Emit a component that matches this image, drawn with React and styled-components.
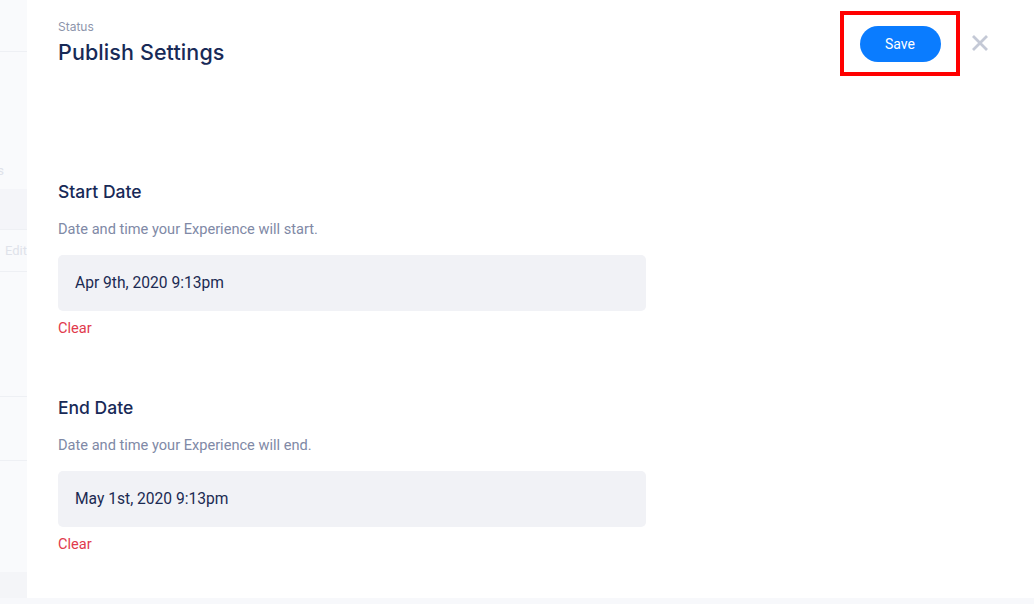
import React from "react";
import styled, { createGlobalStyle } from "styled-components";

const Global = createGlobalStyle`
  html, body { margin: 0; padding: 0; background: #f7f8fb; }
  body { font-family: Roboto, "Liberation Sans", Arial, sans-serif; }
  * { box-sizing: border-box; }
`;

const Screen = styled.div`
  width: 1034px;
  height: 604px;
  display: flex;
  flex-direction: column;
  background: #f7f8fb;
  overflow: hidden;
`;

const Body = styled.div`
  display: flex;
  height: 598px;
`;

const Sidebar = styled.aside`
  width: 27px;
  flex: none;
  background: #f9fafc;
  overflow: hidden;
  display: flex;
  flex-direction: column;
`;

const SideRow = styled.div`
  height: ${(p) => p.h}px;
  flex: none;
  display: flex;
  align-items: ${(p) => p.align || "center"};
  padding-bottom: ${(p) => p.pb || 0}px;
  background: ${(p) => p.bg || "transparent"};
  border-bottom: ${(p) => (p.line ? "1px solid #eef0f4" : "none")};
  color: #dfe2ea;
  font-size: 13px;
  white-space: nowrap;
  margin-left: ${(p) => p.shift || 0}px;
  gap: 6px;
`;

const Panel = styled.main`
  flex: 1;
  background: #ffffff;
  padding: 20px 0 0 31px;
  display: flex;
  flex-direction: column;
`;

const Header = styled.header`
  display: flex;
  justify-content: space-between;
  align-items: flex-start;
  height: 160px;
`;

const TitleBlock = styled.div`
  display: flex;
  flex-direction: column;
`;

const Eyebrow = styled.div`
  font-family: Inter, "Noto Sans", sans-serif;
  font-size: 12px;
  color: #8d95ab;
  line-height: 14px;
`;

const Title = styled.h1`
  margin: 4px 0 0;
  font-family: Inter, "Noto Sans", sans-serif;
  font-weight: 500;
  font-size: 21.5px;
  line-height: 28px;
  color: #182a57;
  letter-spacing: 0.1px;
`;

const Actions = styled.div`
  display: flex;
  align-items: center;
  margin-right: 44px;
  margin-top: -9px;
  gap: 10px;
`;

const Highlight = styled.div`
  border: 4px solid #ff0000;
  width: 120px;
  height: 65px;
  display: flex;
  align-items: center;
  justify-content: center;
`;

const SaveButton = styled.button`
  width: 81px;
  height: 36px;
  border-radius: 18px;
  border: none;
  background: #0a7cff;
  color: #ffffff;
  font-family: Roboto, "Liberation Sans", sans-serif;
  font-size: 14px;
  cursor: pointer;
`;

const CloseButton = styled.button`
  background: none;
  border: none;
  padding: 0;
  width: 20px;
  height: 20px;
  display: flex;
  align-items: center;
  justify-content: center;
  margin-top: -2px;
`;

const Section = styled.section`
  display: flex;
  flex-direction: column;
  width: 588px;
  margin-bottom: ${(p) => p.mb || 0}px;
`;

const SectionTitle = styled.h2`
  margin: 0;
  font-family: Inter, "Noto Sans", sans-serif;
  font-weight: 500;
  font-size: 17.5px;
  line-height: 24px;
  color: #182a57;
`;

const Description = styled.p`
  margin: 17px 0 0;
  font-size: 14.6px;
  line-height: 16px;
  color: #8089a6;
`;

const DateField = styled.div`
  margin-top: 18px;
  height: 56px;
  border-radius: 5px;
  background: #f1f2f6;
  display: flex;
  align-items: center;
  padding-left: 17px;
  font-size: 15.6px;
  color: #1b2a52;
`;

const ClearLink = styled.a`
  margin-top: 9px;
  font-size: 14.6px;
  line-height: 16px;
  color: #e13a4c;
  cursor: pointer;
`;

const BottomStrip = styled.div`
  height: 6px;
  background: #f7f8fb;
`;

function DateSection({ title, desc, value, mb }) {
  return (
    <Section mb={mb}>
      <SectionTitle>{title}</SectionTitle>
      <Description>{desc}</Description>
      <DateField>{value}</DateField>
      <ClearLink>Clear</ClearLink>
    </Section>
  );
}

export default function App() {
  return (
    <>
      <Global />
      <Screen>
        <Body>
          <Sidebar>
            <SideRow h={52} line />
            <SideRow h={137} align="flex-end" pb={11} shift={-40}>Actions</SideRow>
            <SideRow h={41} bg="#f4f5f9" line />
            <SideRow h={42} line shift={-6}>
              <svg width="10" height="10" viewBox="0 0 10 10">
                <path d="M2 8 L8 2" stroke="#cdd7f5" strokeWidth="1.5" />
              </svg>
              Edit
            </SideRow>
            <SideRow h={125} line />
            <SideRow h={64} line />
            <SideRow h={111} />
            <SideRow h={26} bg="#f4f5f8" />
          </Sidebar>
          <Panel>
            <Header>
              <TitleBlock>
                <Eyebrow>Status</Eyebrow>
                <Title>Publish Settings</Title>
              </TitleBlock>
              <Actions>
                <Highlight>
                  <SaveButton>Save</SaveButton>
                </Highlight>
                <CloseButton aria-label="Close">
                  <svg width="18" height="18" viewBox="0 0 18 18">
                    <path
                      d="M2 2 L16 16 M16 2 L2 16"
                      stroke="#c4c9d6"
                      strokeWidth="2.8"
                      strokeLinecap="butt"
                    />
                  </svg>
                </CloseButton>
              </Actions>
            </Header>
            <DateSection
              title="Start Date"
              desc="Date and time your Experience will start."
              value="Apr 9th, 2020 9:13pm"
              mb={60}
            />
            <DateSection
              title="End Date"
              desc="Date and time your Experience will end."
              value="May 1st, 2020 9:13pm"
            />
          </Panel>
        </Body>
        <BottomStrip />
      </Screen>
    </>
  );
}
